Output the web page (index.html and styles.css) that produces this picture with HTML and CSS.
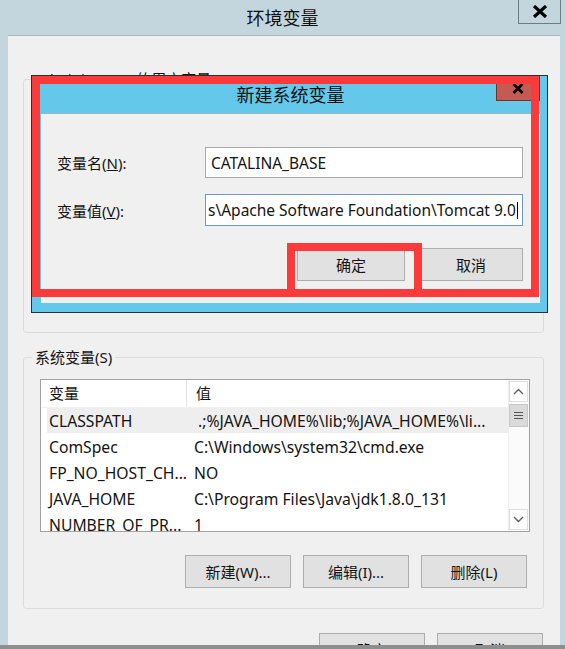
FILE: index.html
```html
<!DOCTYPE html>
<html lang="zh-CN">
<head>
<meta charset="utf-8">
<title>环境变量</title>
<link rel="stylesheet" href="styles.css">
</head>
<body>
<div class="window">
  <header class="titlebar">
    <span class="title">环境变量</span>
    <button class="close-main" aria-label="关闭">
      <svg width="16" height="13" viewBox="0 0 16 13"><path d="M2 1 L14 12 M14 1 L2 12" stroke="#000" stroke-width="3.2" fill="none"/></svg>
    </button>
  </header>
  <div class="client">
    <fieldset class="group user-group">
      <legend>Administrator 的用户变量(U)</legend>
    </fieldset>
    <fieldset class="group sys-group">
      <legend>系统变量(S)</legend>
      <div class="listview">
        <div class="lv-main">
          <div class="lv-head"><div>变量</div><div>值</div></div>
          <div class="lv-row selected"><span>CLASSPATH</span><span>&nbsp;.;%JAVA_HOME%\lib;%JAVA_HOME%\li...</span></div>
          <div class="lv-row"><span>ComSpec</span><span>C:\Windows\system32\cmd.exe</span></div>
          <div class="lv-row"><span>FP_NO_HOST_CH...</span><span>NO</span></div>
          <div class="lv-row"><span>JAVA_HOME</span><span>C:\Program Files\Java\jdk1.8.0_131</span></div>
          <div class="lv-row"><span>NUMBER_OF_PR...</span><span>1</span></div>
        </div>
        <div class="lv-scroll">
          <div class="sb-btn"><svg width="11" height="7" viewBox="0 0 11 7"><path d="M1 6 L5.5 1.5 L10 6" stroke="#606060" stroke-width="1.4" fill="none"/></svg></div>
          <div class="sb-thumb"><svg width="9" height="7" viewBox="0 0 9 7"><path d="M0 0.5 H9 M0 3.5 H9 M0 6.5 H9" stroke="#555" stroke-width="1"/></svg></div>
          <div class="sb-track"></div>
          <div class="sb-btn"><svg width="11" height="7" viewBox="0 0 11 7"><path d="M1 1 L5.5 5.5 L10 1" stroke="#606060" stroke-width="1.4" fill="none"/></svg></div>
        </div>
      </div>
      <div class="btnrow">
        <button class="btn">新建(W)...</button>
        <button class="btn">编辑(I)...</button>
        <button class="btn">删除(L)</button>
      </div>
    </fieldset>
    <div class="footer">
      <button class="btn">确定</button>
      <button class="btn">取消</button>
    </div>

    <div class="dialog">
      <div class="dlg-title">
        <span class="dlg-title-text">新建系统变量</span>
        <button class="dlg-close" aria-label="关闭">
          <svg width="12" height="11" viewBox="0 0 12 11"><path d="M1.5 1 L10.5 10 M10.5 1 L1.5 10" stroke="#000" stroke-width="2.6" fill="none"/></svg>
        </button>
      </div>
      <div class="dlg-body">
        <label class="dlg-label">变量名(<u>N</u>):</label>
        <div class="input">CATALINA_BASE</div>
        <label class="dlg-label">变量值(<u>V</u>):</label>
        <div class="input focused">s\Apache Software Foundation\Tomcat 9.0<span class="caret"></span></div>
        <div class="dlg-btns">
          <button class="btn ok">确定</button>
          <button class="btn cancel">取消</button>
        </div>
      </div>
    </div>
  </div>
  <div class="band"></div>
</div>
<div class="mark mark-dialog"></div>
<div class="mark mark-ok"></div>
</body>
</html>
```
FILE: styles.css
```css
* { box-sizing: border-box; }
html, body { margin: 0; padding: 0; }
body {
  width: 565px;
  height: 649px;
  overflow: hidden;
  position: relative;
  background: #c4d6dd;
  font-family: "Noto Sans", "Noto Sans CJK SC", sans-serif;
  font-size: 15px;
  color: #141414;
}
.window { display: flex; flex-direction: column; height: 649px; }

.titlebar {
  height: 35px;
  flex: none;
  display: grid;
  grid-template-columns: 1fr auto 1fr;
  align-items: start;
}
.title {
  grid-column: 2;
  font-family: "Noto Sans CJK SC", sans-serif;
  font-size: 18px;
  line-height: 34px;
  color: #111;
}
.close-main {
  grid-column: 3;
  justify-self: end;
  margin-right: 4px;
  width: 43px;
  height: 24px;
  padding: 0;
  background: transparent;
  border: 1px solid #6c7c83;
  border-top: none;
  display: flex;
  align-items: center;
  justify-content: center;
}

.client {
  flex: 1;
  min-height: 0;
  margin: 0 5px 0 8px;
  background: #f0f0f0;
  border-top: 1px solid #a7b8bf;
  position: relative;
  padding: 0 16px 0 15px;
  display: flex;
  flex-direction: column;
  overflow: hidden;
}

.group {
  margin: 0;
  padding: 0 13px 0 16px;
  border: 1px solid #dcdcdc;
  border-radius: 3px;
  min-width: 0;
}
.group legend {
  margin-left: -8px;
  padding: 0 3px;
  line-height: 20px;
  font-size: 15px;
}
.user-group { margin-top: 33px; height: 264px; flex: none; }
.sys-group { margin-top: 14px; padding-bottom: 20px; flex: none; }

.listview {
  margin-top: 12px;
  height: 153px;
  border: 1px solid #a3a3a3;
  background: #fff;
  display: grid;
  grid-template-columns: 1fr 21px;
  overflow: hidden;
}
.lv-main { overflow: hidden; }
.lv-head {
  display: grid;
  grid-template-columns: 146px 1fr;
  height: 27px;
}
.lv-head > div {
  padding-left: 8px;
  line-height: 27px;
  border-bottom: 1px solid #f0f0f0;
}
.lv-head > div:first-child { border-right: 1px solid #e3e3e3; }
.lv-head > div + div { padding-left: 9px; }
.lv-row {
  display: grid;
  grid-template-columns: 146px 1fr;
  height: 26px;
  line-height: 28px;
  font-size: 15.7px;
  white-space: nowrap;
}
.lv-row > span { padding-left: 8px; overflow: hidden; }
.lv-row > span + span { padding-left: 7px; }
.lv-row.selected { background: linear-gradient(to right, transparent 6px, #eeeeee 6px); }

.lv-scroll {
  background: #fbfbfb;
  border-left: 1px solid #eeeeee;
  display: flex;
  flex-direction: column;
  padding: 1px 1px 1px 0;
}
.sb-btn {
  height: 21px;
  flex: none;
  border: 1px solid #dedede;
  background: #fff;
  display: flex;
  align-items: center;
  justify-content: center;
}
.sb-thumb {
  margin-top: 2px;
  height: 23px;
  flex: none;
  background: #dadada;
  border: 1px solid #c8c8c8;
  display: flex;
  align-items: center;
  justify-content: center;
}
.sb-track { flex: 1; }

.btn {
  font-family: "Noto Sans", "Noto Sans CJK SC", sans-serif;
  font-size: 15px;
  color: #141414;
  background: #e1e1e1;
  border: 1px solid #adadad;
  padding: 0;
  height: 33px;
  width: 106px;
  flex: none;
}
.btnrow {
  display: flex;
  justify-content: flex-end;
  gap: 12px;
  margin-top: 23px;
  padding-right: 3px;
}
.footer {
  display: flex;
  justify-content: flex-end;
  gap: 12px;
  margin-top: 24px;
  padding-right: 1px;
  flex: none;
}
.band { height: 4px; flex: none; background: #8e8e8e; }

.dialog {
  position: absolute;
  left: 23px;
  top: 39px;
  width: 517px;
  height: 238px;
  border: 1px solid #2e2e2e;
  background: #63c8e9;
  display: flex;
  flex-direction: column;
  padding: 0 7px 9px 9px;
}
.dlg-title {
  height: 37px;
  flex: none;
  display: grid;
  grid-template-columns: 1fr auto 1fr;
  align-items: start;
}
.dlg-title-text {
  grid-column: 2;
  font-family: "Noto Sans CJK SC", sans-serif;
  font-size: 18px;
  line-height: 36px;
  color: #111;
}
.dlg-close {
  grid-column: 3;
  justify-self: end;
  width: 44px;
  height: 25px;
  padding: 0;
  background: #c55a52;
  border: 1px solid #6e3430;
  border-top: none;
  display: flex;
  align-items: center;
  justify-content: center;
}
.dlg-body {
  flex: 1;
  background: #f0f0f0;
  border-top: 1px solid #9fb4bd;
  padding: 33px 17px 0 16px;
  display: grid;
  grid-template-columns: 148px 1fr;
  grid-template-rows: 31px 32px auto;
  row-gap: 16px;
  align-items: center;
  align-content: start;
}
.dlg-label { font-size: 15px; }
.input {
  height: 100%;
  background: #fff;
  border: 1px solid #a9a9a9;
  padding-left: 5px;
  font-size: 15.5px;
  white-space: nowrap;
  overflow: hidden;
  display: flex;
  align-items: center;
}
.input.focused { border-color: #6f96c4; padding-left: 2px; }
.caret {
  display: inline-block;
  width: 1px;
  height: 17px;
  background: #000;
  margin-left: 1px;
}
.dlg-btns {
  grid-column: 1 / -1;
  display: flex;
  justify-content: flex-end;
  gap: 14px;
  margin-top: 6px;
}
.btn.ok { width: 108px; }
.btn.cancel { width: 104px; }

.mark {
  position: absolute;
  border: 8px solid #fd3a3a;
  pointer-events: none;
}
.mark-dialog { left: 32px; top: 76px; width: 507px; height: 221px; }
.mark-ok { left: 287px; top: 243px; width: 135px; height: 54px; }
```
